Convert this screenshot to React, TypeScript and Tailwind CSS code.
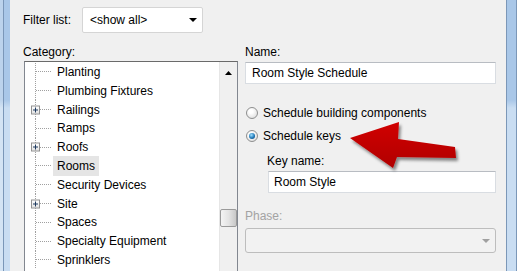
import React from 'react';

type Node = { label: string; expandable?: boolean; selected?: boolean };

const categories: Node[] = [
  { label: 'Planting' },
  { label: 'Plumbing Fixtures' },
  { label: 'Railings', expandable: true },
  { label: 'Ramps' },
  { label: 'Roofs', expandable: true },
  { label: 'Rooms', selected: true },
  { label: 'Security Devices' },
  { label: 'Site', expandable: true },
  { label: 'Spaces' },
  { label: 'Specialty Equipment' },
  { label: 'Sprinklers' },
];

function TreeRow({ node }: { node: Node }) {
  return (
    <div className="relative h-[18.8px] flex items-center">
      {/* tree connector lines */}
      <div className="absolute left-[10px] top-0 bottom-0 w-px bg-[repeating-linear-gradient(to_bottom,#a0a0a0_0_1px,transparent_1px_2px)]" />
      <div className="w-[11px] shrink-0" />
      <div className="w-[16px] h-px shrink-0 bg-[repeating-linear-gradient(to_right,#a0a0a0_0_1px,transparent_1px_2px)]" />
      <div
        className={`ml-[1px] px-[4px] h-[20px] flex items-center whitespace-nowrap ${
          node.selected ? 'bg-[#e5e5e5]' : ''
        }`}
      >
        {node.label}
      </div>
      {node.expandable && (
        <div className="absolute left-[6px] top-1/2 -translate-y-1/2 w-[9px] h-[9px] border border-[#919191] bg-[linear-gradient(to_bottom,#ffffff,#e2e2e2)] flex items-center justify-center">
          <div className="relative w-[5px] h-[5px]">
            <div className="absolute left-0 right-0 top-[2px] h-px bg-[#1e3a5f]" />
            <div className="absolute top-0 bottom-0 left-[2px] w-px bg-[#1e3a5f]" />
          </div>
        </div>
      )}
    </div>
  );
}

function Radio({ checked }: { checked?: boolean }) {
  return (
    <div className="w-[12px] h-[12px] rounded-full border border-[#8e8f8f] bg-[radial-gradient(circle_at_40%_35%,#ffffff_20%,#d6d6d6_100%)] flex items-center justify-center shrink-0">
      {checked && (
        <div className="w-[6px] h-[6px] rounded-full bg-[radial-gradient(circle_at_40%_35%,#9fe0ff_0%,#1f78b8_55%,#0b3b63_100%)]" />
      )}
    </div>
  );
}

export default function App() {
  return (
    <div
      className="relative w-[517px] h-[271px] overflow-hidden flex bg-[#f0f0f0] text-[12px] text-black"
      style={{ fontFamily: '"Liberation Sans", Arial, sans-serif' }}
    >
      {/* left window frame */}
      <div className="w-[10px] shrink-0 flex">
        <div className="w-[3px] bg-[linear-gradient(to_bottom,#bcd3ec_0,#bcd3ec_100px,#d4e4f4_108px,#d4e4f4_100%)]" />
        <div className="w-px bg-[#7b97b8]" />
        <div className="flex-1 bg-[linear-gradient(to_bottom,#a9c7e8_0,#a9c7e8_100px,#c9ddf2_108px,#c9ddf2_100%)]" />
      </div>

      {/* dialog body */}
      <div className="flex-1 flex flex-col">
        {/* filter row */}
        <div className="mt-[7px] h-[26px] flex items-center pl-[13px]">
          <div className="w-[59px]">Filter list:</div>
          <div className="w-[121px] h-[26px] bg-white border border-[#d5d5d5] rounded-[2px] flex items-center pl-[7px] pr-[5px]">
            <span className="flex-1">&lt;show all&gt;</span>
            <svg width="8" height="4" viewBox="0 0 8 4">
              <path d="M0 0 H8 L4 4 Z" fill="#000" />
            </svg>
          </div>
        </div>

        <div className="mt-[12px] flex">
          {/* category column */}
          <div className="pl-[13px] flex flex-col">
            <div className="h-[15px] leading-[15px]">Category:</div>
            <div className="mt-[1px] ml-[1px] w-[214px] h-[220px] border border-[#828790] border-t-[#6a6a6a] bg-white flex">
              <div className="flex-1 pt-[0.6px]">
                {categories.map((c) => (
                  <TreeRow key={c.label} node={c} />
                ))}
              </div>
              {/* scrollbar */}
              <div className="w-[18px] bg-[#f0f0f0] border-l border-[#e6e6e6] flex flex-col items-center">
                <div className="h-[22px] flex items-center justify-center">
                  <svg width="7" height="4" viewBox="0 0 7 4">
                    <path d="M0 4 L3.5 0 L7 4 Z" fill="#000" />
                  </svg>
                </div>
                <div className="mt-[125px] w-[17px] h-[18px] rounded-[2px] border border-[#9a9a9a] bg-[linear-gradient(to_right,#f4f4f4,#e4e4e4_50%,#c8c8c8)]" />
              </div>
            </div>
          </div>

          {/* right column */}
          <div className="ml-[7px] w-[251px] flex flex-col">
            <div className="h-[15px] leading-[15px]">Name:</div>
            <div className="mt-[2px] h-[22px] bg-white border border-[#d9dde2] border-t-[#b8bcc2] flex items-center pl-[6px]">
              Room Style Schedule
            </div>

            <div className="mt-[21px] h-[16px] flex items-center pl-[1px] gap-[5px]">
              <Radio />
              <span>Schedule building components</span>
            </div>
            <div className="mt-[7px] h-[16px] flex items-center pl-[1px] gap-[5px]">
              <Radio checked />
              <span>Schedule keys</span>
            </div>

            <div className="mt-[10px] h-[15px] leading-[15px] pl-[22px]">Key name:</div>
            <div className="mt-[2px] ml-[23px] h-[22px] bg-white border border-[#d9dde2] border-t-[#b8bcc2] flex items-center pl-[5px]">
              Room Style
            </div>

            <div className="mt-[16px] h-[15px] leading-[15px] text-[#a3a3a3]">Phase:</div>
            <div className="mt-[4px] h-[25px] bg-[#f2f2f2] border border-[#bdbdbd] rounded-[3px] flex items-center justify-end pr-[5px]">
              <svg width="8" height="4" viewBox="0 0 8 4">
                <path d="M0 0 H8 L4 4 Z" fill="#a0a0a0" />
              </svg>
            </div>
          </div>
        </div>
      </div>

      {/* right window frame */}
      <div className="w-[11px] shrink-0 flex">
        <div className="w-px bg-[#7b97b8]" />
        <div className="flex-1 bg-[linear-gradient(to_bottom,#a9c7e8_0,#a9c7e8_100px,#c9ddf2_108px,#c9ddf2_100%)]" />
        <div className="w-px bg-[#7b97b8]" />
      </div>

      {/* red annotation arrow */}
      <svg className="absolute left-0 top-0 pointer-events-none" width="517" height="271" viewBox="0 0 517 271">
        <defs>
          <filter id="arrowShadow" x="-20%" y="-20%" width="140%" height="160%">
            <feDropShadow dx="2" dy="3" stdDeviation="1.6" floodColor="#000" floodOpacity="0.45" />
          </filter>
          <linearGradient id="arrowFill" x1="0" y1="0" x2="0" y2="1">
            <stop offset="0" stopColor="#d10000" />
            <stop offset="1" stopColor="#b00000" />
          </linearGradient>
        </defs>
        <polygon
          points="350,138 399,122 398,139 455,147 456,158 397,157 393,168"
          fill="url(#arrowFill)"
          filter="url(#arrowShadow)"
        />
      </svg>
    </div>
  );
}
